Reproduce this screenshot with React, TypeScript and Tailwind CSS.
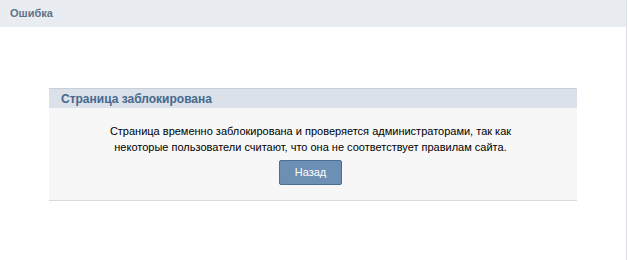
export default function App() {
  return (
    <div className="h-[260px] w-[628px] bg-white font-['Liberation_Sans',sans-serif] text-[11px]">
      <div className="h-full w-[627px] border-r border-[#dae1e8]">
        <div className="flex h-[27px] items-center bg-[#e9ecf0] pl-[10px] text-[11px] font-bold text-[#5f7389]">
          Ошибка
        </div>
        <div className="pl-[49px] pt-[61px]">
          <div className="w-[528px] border-b border-[#dadada] bg-[#f7f7f7]">
            <div className="flex h-[20px] items-center border-t border-[#c5d0db] bg-[#dae1e8] pl-[12px] text-[12px] font-bold text-[#45688e]">
              Страница заблокирована
            </div>
            <div className="flex flex-col items-center pt-[15px] pr-[5px] pb-[15px]">
              <p className="text-center text-[11px] leading-[16px] text-black">
                Страница временно заблокирована и проверяется администраторами, так как
                <br />
                некоторые пользователи считают, что она не соответствует правилам сайта.
              </p>
              <button className="mt-[5px] h-[25px] w-[63px] rounded-[2px] border border-[#4b6e96] bg-[#6d8fb3] text-[11px] text-white">
                Назад
              </button>
            </div>
          </div>
        </div>
      </div>
    </div>
  );
}
